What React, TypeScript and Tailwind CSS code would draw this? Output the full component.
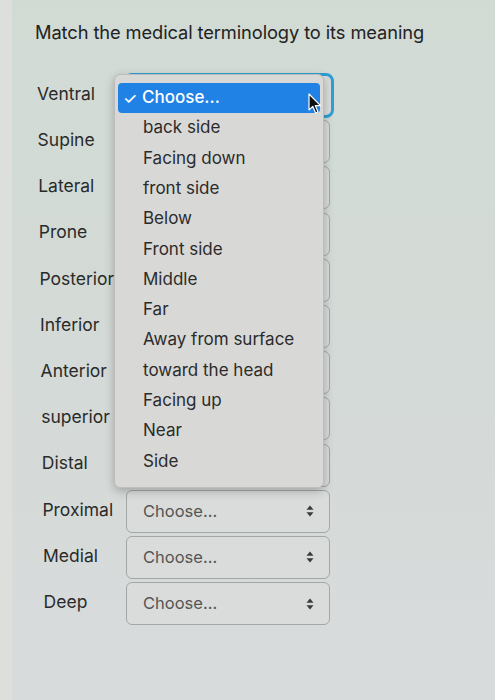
import React from "react";

const labels = [
  "Ventral",
  "Supine",
  "Lateral",
  "Prone",
  "Posterior",
  "Inferior",
  "Anterior",
  "superior",
  "Distal",
  "Proximal",
  "Medial",
  "Deep",
];

const options = [
  "back side",
  "Facing down",
  "front side",
  "Below",
  "Front side",
  "Middle",
  "Far",
  "Away from surface",
  "toward the head",
  "Facing up",
  "Near",
  "Side",
];

function UpDown() {
  return (
    <svg width="8" height="12" viewBox="0 0 8 12" className="shrink-0">
      <path d="M4 0.5 L7.5 4.8 L0.5 4.8 Z" fill="#3a3a3a" />
      <path d="M4 11.5 L7.5 7.2 L0.5 7.2 Z" fill="#3a3a3a" />
    </svg>
  );
}

function Cursor() {
  return (
    <svg width="14" height="22" viewBox="0 0 14 22">
      <path
        d="M1 1 L1 17 L4.8 13.4 L7.6 20 L10 19 L7.3 12.6 L12.5 12.6 Z"
        fill="#111"
        stroke="#fff"
        strokeWidth="1.2"
        strokeLinejoin="round"
      />
    </svg>
  );
}

export default function App() {
  return (
    <div
      className="relative w-[495px] h-[700px] overflow-hidden bg-gradient-to-b from-[#d1dbd4] via-[#d4dad7] to-[#d8dbdc] text-[#262626]"
      style={{ fontFamily: "Inter, 'Noto Sans', sans-serif" }}
    >
      <div className="absolute left-0 top-0 h-full w-[12px] bg-[#dcdfdc]" />
      <div className="pl-[35px] pt-[18px]">
        <h1 className="text-[18.3px] leading-[28px] font-normal text-[#222] tracking-[-0.1px]">
          Match the medical terminology to its meaning
        </h1>
        <div className="mt-[28px] flex flex-col gap-[3.2px]">
          {labels.map((l, i) => (
            <div key={l} className="flex items-center h-[43px]">
              <div
                className="w-[91px] text-[17.5px] text-[#2a2a2a] whitespace-nowrap pb-[3px]"
                style={{ paddingLeft: 2 + i * 0.6 }}
              >
                {l}
              </div>
              <div
                className={
                  i === 0
                    ? "ml-[-2px] w-[210px] h-[45px] rounded-[8px] border-[3px] border-[#2f9fd3] bg-[#d8dcda] flex items-center px-[14px] justify-between"
                    : "w-[204px] h-[43px] rounded-[6px] border border-[#a3a8a7] bg-[#d9dcda] flex items-center pl-[16px] pr-[15px] justify-between"
                }
              >
                {i >= 9 && (
                  <>
                    <span className="text-[16.5px] text-[#555]">Choose...</span>
                    <UpDown />
                  </>
                )}
              </div>
            </div>
          ))}
        </div>
      </div>

      {/* open dropdown menu */}
      <div className="absolute left-[114px] top-[74px] w-[210px] h-[414px] rounded-[6px] bg-[#d8d8d6] border border-[#bcbdbc] shadow-[0_3px_10px_rgba(0,0,0,0.25)] pt-[8px] px-[3px]">
        <div className="h-[30px] rounded-[4px] bg-[#1f82e4] text-white flex items-center pl-[5px] text-[17px] font-medium">
          <span className="w-[19px] text-[16px] leading-none">✓</span>
          <span>Choose...</span>
        </div>
        {options.map((o) => (
          <div
            key={o}
            className="h-[30.3px] flex items-center pl-[25px] text-[17px] text-[#2b2b2b] whitespace-nowrap"
          >
            {o}
          </div>
        ))}
      </div>

      <div className="absolute left-[308px] top-[93px]">
        <Cursor />
      </div>
    </div>
  );
}
